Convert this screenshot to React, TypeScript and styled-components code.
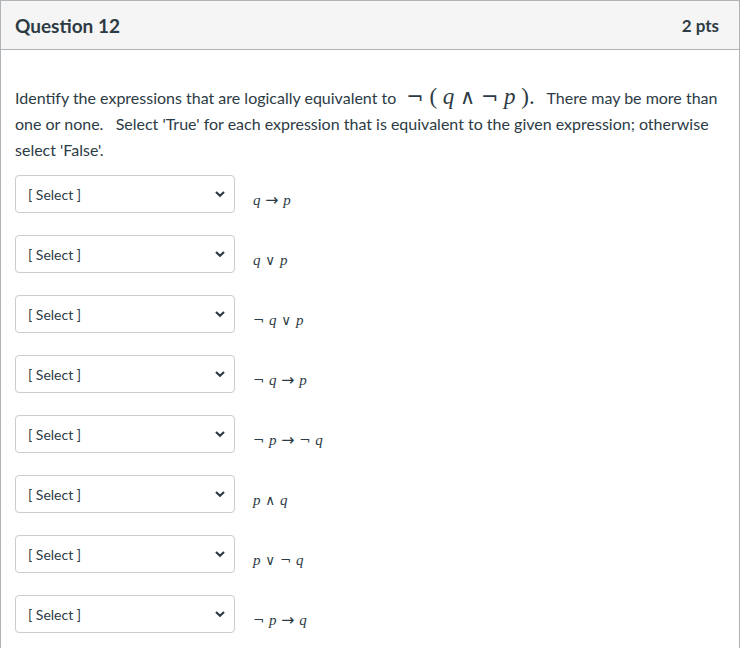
import React from 'react'
import styled, { createGlobalStyle } from 'styled-components'

const GlobalStyle = createGlobalStyle`
  body {
    margin: 0;
    background: #fff;
    font-family: Lato, "Liberation Sans", sans-serif;
    color: #2d3b45;
  }
`

const Card = styled.div`
  width: 740px;
  border: 1px solid #aeb4b8;
  border-bottom: none;
  min-height: 660px;
  box-sizing: border-box;
`

const Header = styled.div`
  display: flex;
  align-items: center;
  justify-content: space-between;
  height: 48px;
  padding: 0 20px 0 14px;
  background: #f5f5f5;
  border-bottom: 1px solid #aeb4b8;
`

const Title = styled.div`
  font-size: 19px;
  font-weight: 700;
  color: #2d3b45;
`

const Points = styled.div`
  font-size: 17px;
  font-weight: 700;
  color: #2d3b45;
`

const Body = styled.div`
  padding: 35px 15px 0 14px;
`

const Prompt = styled.p`
  margin: 0 0 12px 0;
  font-size: 16px;
  line-height: 26px;
  color: #2d3b45;
`

const Math = styled.span`
  font-family: "Liberation Serif", "DejaVu Serif", serif;
  font-size: 23px;
  white-space: pre;
  line-height: 1;
  margin-left: 10px;
`

const MathIt = styled.i`
  font-style: italic;
`

const Op = styled.span`
  font-family: "DejaVu Serif", serif;
  font-size: 0.9em;
`

const Arrow = styled.span`
  font-family: "DejaVu Sans", serif;
  font-size: 1.05em;
`

const Rows = styled.div`
  display: flex;
  flex-direction: column;
  gap: 22px;
`

const Row = styled.div`
  display: flex;
  align-items: flex-start;
  gap: 18px;
`

const SelectBox = styled.div`
  box-sizing: border-box;
  width: 220px;
  height: 38px;
  border: 1px solid #c7cdd1;
  border-radius: 4px;
  background: #fff;
  display: flex;
  align-items: center;
  justify-content: space-between;
  padding: 0 8px 0 12px;
  font-size: 14px;
  color: #2d3b45;
`

const Expr = styled.div`
  padding-top: 16px;
  font-family: "Liberation Serif", "DejaVu Serif", serif;
  font-size: 15px;
  line-height: 18px;
  word-spacing: 1px;
  color: #2d3b45;
  white-space: pre;
`

const Chevron = () => (
  <svg width="12" height="12" viewBox="0 0 12 12">
    <path d="M2 4 L6 7.8 L10 4" fill="none" stroke="#2d3b45" strokeWidth="2.2" />
  </svg>
)

const renderExpr = (toks: string[]) =>
  toks.map((t, i) => {
    if (t === 'p' || t === 'q') return <MathIt key={i}>{t}</MathIt>
    if (t === '→') return <Arrow key={i}>{t}</Arrow>
    if (t.trim() === '') return <span key={i}>{t}</span>
    return <Op key={i}>{t}</Op>
  })

const rows: string[][] = [
  ['q', ' ', '→', ' ', 'p'],
  ['q', ' ', '∨', ' ', 'p'],
  ['¬', ' ', 'q', ' ', '∨', ' ', 'p'],
  ['¬', ' ', 'q', ' ', '→', ' ', 'p'],
  ['¬', ' ', 'p', ' ', '→', ' ', '¬', ' ', 'q'],
  ['p', ' ', '∧', ' ', 'q'],
  ['p', ' ', '∨', ' ', '¬', ' ', 'q'],
  ['¬', ' ', 'p', ' ', '→', ' ', 'q'],
]

export default function App() {
  return (
    <>
      <GlobalStyle />
      <Card>
        <Header>
          <Title>Question 12</Title>
          <Points>2 pts</Points>
        </Header>
        <Body>
          <Prompt>
            Identify the expressions that are logically equivalent to
            <Math>
              <Op>¬</Op> ( <MathIt>q</MathIt> <Op>∧</Op> <Op>¬</Op> <MathIt>p</MathIt> ).
            </Math>
            &nbsp;&nbsp; There may be more than one or none.&nbsp;&nbsp; Select 'True' for each expression that is
            equivalent to the given expression; otherwise select 'False'.
          </Prompt>
          <Rows>
            {rows.map((r, i) => (
              <Row key={i}>
                <SelectBox>
                  <span>[ Select ]</span>
                  <Chevron />
                </SelectBox>
                <Expr>{renderExpr(r)}</Expr>
              </Row>
            ))}
          </Rows>
        </Body>
      </Card>
    </>
  )
}
